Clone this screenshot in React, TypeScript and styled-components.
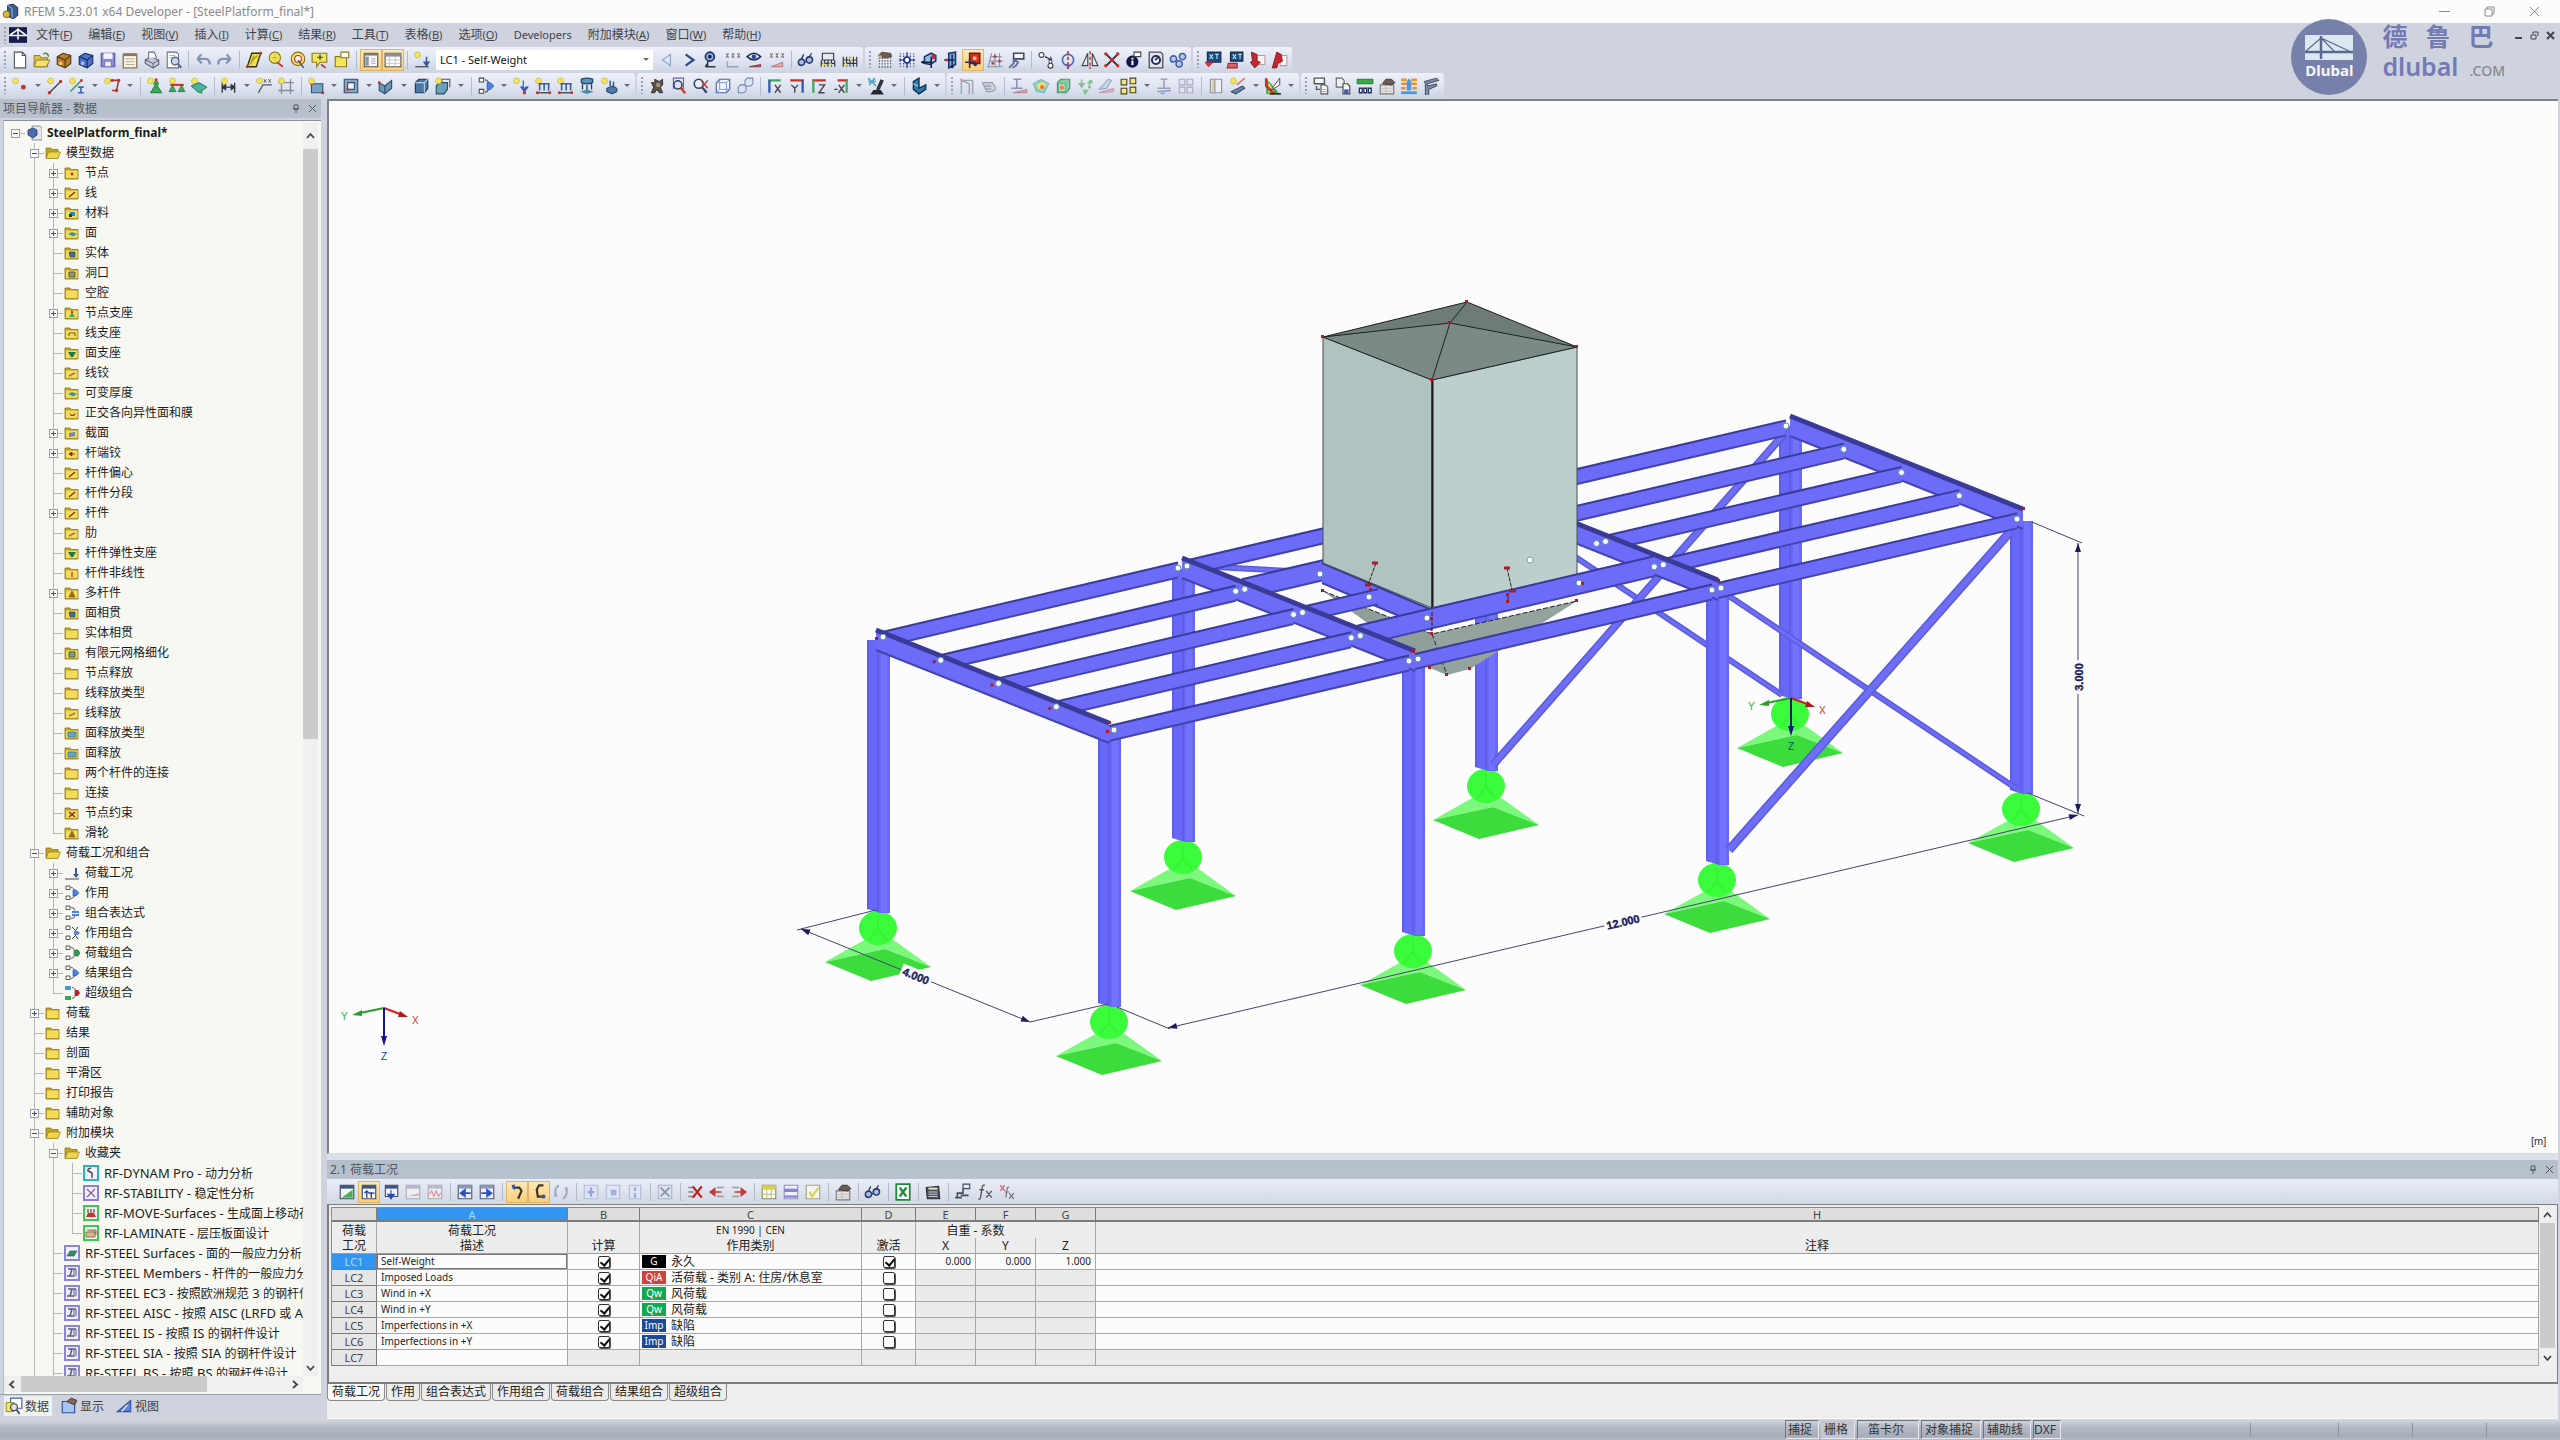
import React from 'react';
import styled, { createGlobalStyle } from 'styled-components';

const UI = '"Noto Sans", "Noto Sans CJK SC", sans-serif';

const GlobalStyle = createGlobalStyle`
  * { box-sizing: border-box; }
  body { margin: 0; background: #cfd3de; font-family: ${UI}; font-size: 12px; color: #222; }
  button, select, input { font: inherit; color: inherit; margin: 0; }
  button { border: 0; padding: 0; background: none; }
`;

/* ---------- icon drawings ---------- */

type Shape = [d: string, fill?: string, stroke?: string, width?: number];

const box = (x: number, y: number, w: number, h: number) => `M${x} ${y}h${w}v${h}h${-w}z`;
const dot = (x: number, y: number, r: number) => `M${x - r} ${y}a${r} ${r} 0 1 0 ${2 * r} 0a${r} ${r} 0 1 0 ${-2 * r} 0z`;
const NONE = 'none';
const K = '#33373d';
const BL = '#3a64a8';
const GY = '#9aa2b4';
const RD = '#c8302c';
const YL = '#f4e65a';
const GN = '#3fa858';
const SUN: Shape = [dot(4, 3.5, 2.6), YL, '#b8a83c', 0.5];

const glyphs: Record<string, Shape[]> = {
  new: [['M3 1h7l3 3v11H3z', '#fff', '#555', 1], ['M10 1v3h3', NONE, '#555', 1]],
  open: [['M1 4h5l1 2h6v8H1z', '#e0c23c', '#8a7420', 0.8], ['M3 8h12l-3 6H1z', '#f6e070', '#8a7420', 0.8], ['M9 3q3-3 5 2', NONE, '#4a8a3a', 1.2]],
  boxBrown: [['M2 5l5-3 7 2v7l-5 4-7-3z', '#b8802c', '#5a3a10', 1], ['M2 5l7 3 5-4M9 8v7', NONE, '#5a3a10', 1], [dot(5, 11, 1.6), '#f4c860']],
  boxBlue: [['M2 5l5-3 7 2v7l-5 4-7-3z', '#4a74c8', '#1c2c60', 1], ['M2 5l7 3 5-4M9 8v7', NONE, '#1c2c60', 1], [dot(5, 11, 1.6), '#a8c4f4']],
  save: [[box(2, 2, 12, 12), '#8a8ed0', '#5458a0', 1], [box(4, 2, 8, 5), '#f4f4fc'], [box(5, 9, 6, 5), '#e8e8f4', '#5458a0', 0.6]],
  clip: [[box(2, 3, 12, 12), '#f8f4e4', '#8a7858', 1.2], [box(2, 2, 12, 2.5), '#8a7858'], ['M4 7h8M4 9.5h8M4 12h8', NONE, '#b0a68c', 0.8]],
  print: [['M2 8l5-3 7 3v4l-5 3-7-4z', '#c4c8d4', '#555c70', 0.9], ['M5 6V1h5l2 5', '#fff', '#666c80', 0.9], ['M2 8l7 3 5-3M9 11v4', NONE, '#555c70', 0.8]],
  preview: [['M2 1h8l2 2v12H2z', '#fff', '#666c80', 0.9], ['M4 4h5M4 6h4', NONE, '#9aa', 0.8], [dot(9, 9, 3.4), '#c8d8ec', '#5a6a8c', 1.2], ['M11.5 11.5l3 3.5', NONE, '#5a6a8c', 2]],
  undo: [['M3 7h7q4 0 4 5M3 7l3.5-4M3 7l4 4', NONE, '#8494b4', 2]],
  redo: [['M13 7H6q-4 0-4 5M13 7L9.5 3M13 7l-4 4', NONE, '#8494b4', 2]],
  rhomb: [['M6 2h8l-4 12H2z', '#f0e050', '#33300c', 1.2], ['M8 4L5 12M11 4l-6 6', NONE, '#a09428', 1], [dot(14, 2, 1.3), RD], [dot(2, 14, 1.3), RD]],
  lasso: [[dot(7, 6, 5), YL, '#8a7a20', 1], ['M9 10l5 4', NONE, RD, 1.6], ['M4 6h6M7 3v6', NONE, '#c8b040', 0.8]],
  target: [[dot(8, 7, 6), YL, '#8a6a20', 1], [dot(8, 7, 3), '#fff', RD, 1], ['M8 8l5 7', NONE, '#555', 1.4]],
  yplus: [['M1 2h13v8H8l-3 4v-4H1z', YL, '#8a7a20', 1], ['M8 3v5M5.5 5.5h5', NONE, K, 1], ['M9 12l4 3', NONE, RD, 1.4]],
  ysheet: [['M2 5h10v9H2z', YL, '#8a7a20', 1], [box(7, 1, 7, 5), '#fff', '#8a7a20', 1]],
  nav: [[box(2, 2, 12, 12), '#f8f8f8', '#555', 1], [box(2, 2, 12, 2), '#777'], [box(3, 5, 3, 8), '#8a94a8'], ['M8 7h4M8 9h4M8 11h4', NONE, '#aaa', 0.8]],
  tbl: [[box(1, 2, 14, 12), '#fff', '#555', 1], [box(1, 2, 14, 3), '#8a8f9c'], ['M1 8h14M1 11h14M5 5v9M10 5v9', NONE, '#bbb', 0.7]],
  loadcase: [SUN, ['M12 5v6M12 13l-2-3h4z', '#3a5a9c', '#3a5a9c', 1.4], ['M2 14h12', NONE, K, 1]],
  prev: [['M11 3L4 8l7 5z', '#e0e8f8', '#8aa0c8', 1]],
  next: [['M5 3l7 5-7 5', NONE, '#2c4c8c', 2]],
  eyeA: [[dot(7, 5, 4), '#8aa8d8', '#1c2c5c', 1.4], [dot(7, 5, 1.6), '#10204c'], ['M3 14h9M5 9v5M5 11l-2 3', NONE, K, 1.4]],
  eyeB: [['M1 5q6-6 12 0q-6 6-12 0z', '#dce6f8', '#1c2c5c', 1.4], [dot(7, 5, 2), '#2c4c8c'], ['M3 14l10-2v2z', '#d06060', '#803030', 0.8]],
  xxx: [['M2 2l2 4M4 2L2 6M7 2l2 4M9 2L7 6M12 2l2 4M14 2l-2 4', NONE, '#777', 0.9], ['M3 9v5h10', NONE, GY, 1.2]],
  xxr: [['M2 2l2 4M4 2L2 6M7 2l2 4M9 2L7 6M12 2l2 4M14 2l-2 4', NONE, '#777', 0.9], ['M3 14l10-4v4z', '#e8b0b0', '#b07070', 0.8]],
  glasses: [[dot(4, 10, 2.8), '#a8c0e8', '#2c3c6c', 1.4], [dot(11, 8, 2.8), '#a8c0e8', '#2c3c6c', 1.4], ['M4 7l2-4M11 5l2-3M7 10l2-1', NONE, '#2c3c6c', 1.2]],
  calc: [[box(3, 2, 10, 6), '#e4e8f0', K, 1], ['M2 8v6M5 8v6M8 8v6M11 8v6M14 8v6M2 11h12', NONE, K, 1], [dot(4, 12, 1.4), YL], [dot(10, 12, 1.4), YL]],
  calc2: [['M2 5v9M5 5v9M8 5v9M11 5v9M14 5v9M2 8h12M2 11h12', NONE, K, 1], [dot(4, 12, 1.4), YL], [dot(9, 7, 1.4), YL]],
  dots: [['M3 6v9M5.5 6v9M8 6v9M10.5 6v9M13 6v9', NONE, '#666', 1], ['M2 7.5h12M2 10h12M2 12.5h12', NONE, '#e6eaf3', 1], ['M2 4l3-3 8 1 1 3-4 1H3z', '#6c5c54', '#403834', 0.6], [box(2, 4, 3, 2), '#d8c49c']],
  gridpt: [['M2 2v12M5 2v12M11 2v12M14 2v12M8 2v12', NONE, '#2c3c88', 1], ['M1 3.5h14M1 6h14M1 10h14M1 12.5h14', NONE, '#e6eaf3', 1.2], [dot(8, 8, 2.6), '#fff', '#1c2c8c', 1.4], ['M8 1v4M8 11v4M1 8h4M11 8h4', NONE, '#1c2c8c', 1]],
  snap: [['M4 5l6-3 4 2v5l-5 3-5-1z', '#8cc0e8', '#1c3468', 1.4], ['M1 10h10M10 5v10', NONE, '#181c48', 1.4], [dot(12, 5, 2), RD], [dot(3, 10, 1.3), '#181c48']],
  snap2: [['M6 2l6-1v11l-6 3z', '#6ab0e4', '#1c3468', 1.4], ['M2 8h9M9 3v11', NONE, '#181c48', 1.2], [dot(4, 8, 1.4), RD], [dot(9, 14, 1.4), '#181c48']],
  snap3: [[box(5, 2, 9, 9), '#d83028', '#7c1814', 1.4], [box(8, 5, 3, 3), '#fbd070'], ['M1 10h9M5 7v8', NONE, '#24305c', 1.4], [dot(10, 12, 1.6), '#24305c']],
  mesh: [['M5 2L2 14M8 2v12M12 2v12M1 14h14M3 9h12M4 5h10', NONE, '#8a94ac', 1], [dot(8, 5, 1.2), RD], [dot(6, 11, 1.2), RD], [dot(12, 9, 1.2), RD]],
  flag: [[box(5, 2, 9, 5), '#f4f6fa', '#444a5c', 1.4], ['M5 7v4M1 15l4-4 1-3 3 2-2 3-3 2', NONE, '#5a6c98', 1.6]],
  chain: [[dot(4, 3.5, 2.2), '#fff', K, 1], [dot(12, 13, 2.2), '#fff', K, 1], ['M7 5l6 3M13 8l-3-.5M13 8l-1-3', NONE, K, 1], [dot(12, 9.5, 1.4), '#fff', K, 0.8]],
  rotate: [[dot(8, 8, 5), NONE, '#4a64b0', 1.4], ['M8 0v3M8 5v3M8 10v3M8 14v2', NONE, RD, 1.4], ['M6 12l3 1.5-2 2', NONE, '#4a64b0', 1.4]],
  mirror: [['M6 2v11H1zM10 2v11h5z', '#e4e8ec', '#444', 1], ['M8 0v3M8 5v3M8 10v3M8 14v2', NONE, RD, 1.2]],
  cross: [['M2 2l12 12M14 2L2 14', NONE, '#4a3038', 1.6], [dot(2.5, 2.5, 1.5), RD], [dot(13, 2.5, 1.5), RD], [dot(8, 8, 1.6), RD], [dot(2.5, 13, 1.5), RD], [dot(13, 13, 1.5), RD]],
  info: [[dot(6.5, 9.5, 5.4), '#10184c'], [box(5.7, 8.5, 1.8, 4), '#fff'], [box(5.7, 6, 1.8, 1.5), '#fff'], [box(8, 1, 6, 4), '#fff', '#444', 1]],
  sheetc: [['M2 1h10l2 2v12H2z', '#e4e4e8', '#555', 1.2], [dot(8, 8, 3.6), '#fff', '#24305c', 1.8], ['M7 8l4-3', NONE, '#24305c', 1.4]],
  gears: [[dot(4, 7, 2.8), '#b4c8ec', '#4058a0', 1.3], [dot(12, 5, 2.8), '#b4c8ec', '#4058a0', 1.3], [dot(9, 11.5, 2.8), '#b4c8ec', '#4058a0', 1.3]],
  teal: [[box(3, 1, 12, 9), '#1c4c80', '#102c4c', 1], ['M5 3l3 4M8 3L5 7M10 3h3M11.5 3v4', NONE, '#b4e0f0', 1], ['M1 10l3 4 4-4z', '#d83840', '#a82028', 0.8]],
  tealUp: [[box(4, 1, 11, 8), '#1c4c80', '#102c4c', 1], ['M6 3l3 4M9 3L6 7M11 3h3M12.5 3v4', NONE, '#b4e0f0', 1], ['M2 11h8v4H1z', '#d86068', '#a02830', 0.9]],
  pdf: [['M8 4h7v8H8z', '#f8f4f4', '#b89898', 0.9], ['M3 1l5 2v6l3 1-5 5-4-5 2-1z', '#c82430', '#801820', 0.8]],
  pdfUp: [['M9 4h6v9H9z', '#f8f4f4', '#b89898', 0.9], ['M6 1l4 2 1 6-4 2-1 4H2z', '#c82430', '#801820', 0.8]],
  node: [SUN, [dot(11, 9, 2.2), RD]],
  line: [SUN, ['M3 14L13 4', NONE, '#444', 1.2], [dot(3, 14, 1.5), RD], [dot(13, 4, 1.5), RD]],
  member: [SUN, ['M2 13L12 3', NONE, '#58a070', 1.6], ['M9 9h5M11.5 9v5M9 14h5', NONE, BL, 1.4], [dot(12, 3, 1.2), RD]],
  poly: [SUN, ['M8 3h6l-2 9H8', NONE, '#a03838', 1.4], [dot(8, 3, 1.4), RD], [dot(14, 3, 1.4), RD], [dot(12, 12, 1.6), RD]],
  support: [SUN, ['M9 6l5 8H4z', GN, '#1c6c34', 0.8], [dot(9, 6, 2.4), '#3a9a50'], [dot(9, 2.5, 1.4), RD]],
  linesup: [SUN, ['M2 7h12', NONE, RD, 1.8], ['M4 7l3 6H1zM12 7l3 6H9z', GN, '#1c6c34', 0.6]],
  surfsup: [SUN, ['M1 8l7-3 7 4-7 5z', '#4ab0a0', '#1c6c54', 0.8], ['M8 14l3-3v4z', GN]],
  dim: [['M2 5v9M13 5v9M2 9h11M2 9l3-2v4zM13 9l-3-2v4z', K, K, 1.2], SUN],
  dimtxt: [SUN, ['M3 14l4-7h8', NONE, '#555', 1.2], ['M8 2l2 3M10 2L8 5M12 2l2 3M14 2l-2 3', NONE, '#555', 0.8]],
  frame: [['M4 2v13M12 2v13M1 5h14M1 12h14', NONE, '#888c98', 1.2], SUN],
  surf: [[box(4, 6, 10, 8), '#7aa4c4', '#34506c', 1], [dot(4, 6, 1.4), RD], [dot(14, 14, 1.4), RD], SUN],
  opening: [[box(2, 2, 12, 12), '#8ca4c4', '#34506c', 1], [box(5, 5, 6, 6), '#f0f4fa', '#34506c', 1], [dot(5, 11, 1.2), RD]],
  shell: [['M2 5l5 3 6-5v7l-6 5-5-3z', '#6c98b8', '#2c4c68', 1], ['M7 8v7', NONE, '#2c4c68', 1], [dot(2, 5, 1.3), RD]],
  solid: [['M3 5l3-3h8v8l-3 4H3z', '#4c78a8', '#1c3454', 1], ['M3 5h8l3-3M11 5v9', NONE, '#b8d0e8', 1]],
  solidset: [['M2 8l3-3h7v6l-3 4H2z', '#6ca0b8', '#2c4c68', 1], ['M7 5V2h7v7', NONE, '#555', 1], SUN],
  combo: [[box(2, 1, 4, 3.5), '#fff', '#444', 0.9], [box(2, 11, 4, 3.5), '#fff', '#444', 0.9], ['M7 2.5q4 0 3 5.5q1 5-3 5.5', NONE, '#555', 1], ['M9 5h3l3 3-3 3H9z', '#4a84e0', '#1c4cb0', 0.6]],
  comboG: [[box(2, 1, 4, 3.5), '#fff', '#444', 0.9], [box(2, 11, 4, 3.5), '#fff', '#444', 0.9], ['M7 2.5q4 0 3 5.5q1 5-3 5.5', NONE, '#555', 1], ['M11 5h3l2 3-2 3h-3z', '#2ca048', '#107028', 0.6]],
  comboX: [[box(2, 1, 4, 3.5), '#fff', '#444', 0.9], [box(2, 11, 4, 3.5), '#fff', '#444', 0.9], ['M8 2l4 4M8 14l4-4M14 2l-2 3M14 14l-2-3', NONE, '#444', 1], ['M10 6h4l2 2-2 2h-4z', '#5a8ce0']],
  comboE: [[box(2, 1, 4, 3.5), '#fff', '#444', 0.9], [box(2, 11, 4, 3.5), '#fff', '#444', 0.9], ['M7 2.5q4 0 4 3M7 13.5q4 0 4-3', NONE, '#555', 1], ['M8 6h7v2H8zM8 9h7v2H8z', '#4a84e0']],
  comboR: [[box(1, 1, 6, 4), '#4a94d8'], [box(1, 11, 6, 4), '#34a850'], ['M8 2.5q4 0 3 5.5q1 5-3 5.5', NONE, '#555', 1], ['M11 5h3l2 3-2 3h-3z', '#c01c2c']],
  lcase: [['M1 14h14', NONE, '#777', 1.4], ['M11 3h2v6h2l-3 4-3-4h2z', '#3a54a0']],
  nload: [SUN, ['M10 3v6M10 9h-2l3 4 3-4h-2', '#3a6cc8', '#2c4c98', 1], [dot(11, 14, 1.5), RD]],
  mload: [SUN, ['M4 6h10M5 6v6M9 6v6M13 6v6', NONE, '#3a5ca8', 1.4], ['M2 14h13', NONE, '#444', 1.2], [dot(3, 14, 1.3), RD], [dot(14, 14, 1.3), RD]],
  sload: [['M3 2q5-2 10 0v3q-5 2-10 0zM4 6v5M8 7v5M12 6v5', '#5c94bc', '#24486c', 1.2], ['M2 13l6-2 6 2-6 2z', '#4a8ca8']],
  gload: [SUN, ['M9 3v5M12 4v5', NONE, BL, 1.4], ['M6 10l5-2 4 2v3l-4 2-5-2z', '#4c78a8', '#1c3454', 0.8]],
  tele: [['M3 5h3V2l4 2 3-2v5l-2 2 2 5h-3l-2-3-2 3H3l2-5z', '#5c5048', '#332c28', 0.8], [dot(9, 7, 2), '#a09080']],
  zoomw: [[box(3, 1, 9, 9), NONE, '#7a5cb0', 1], [dot(7, 7, 3.6), '#d8e4f4', '#33406c', 1.4], ['M9.5 9.5l4 5', NONE, RD, 2]],
  zoomx: [[dot(6, 6, 4), '#e8eef8', '#33406c', 1.4], ['M9 9l4 5', NONE, '#33406c', 2], ['M8 3l6 7M14 3L8 10', NONE, RD, 1.2]],
  cube: [['M2 5l3-3h9v9l-3 3H2z', '#eef4fc', '#4c64a0', 1], ['M2 5h9l3-3M11 5v9M5 2v9h9M5 11l-3 3', NONE, '#7c90c0', 0.8]],
  cubes: [['M2 9l2-2h5v5l-2 2H2z', '#dce4f4', '#7484ac', 0.9], ['M8 3l2-2h5v5l-2 2H8z', '#dce4f4', '#7484ac', 0.9]],
  vx: [['M2 3h11', NONE, GN, 2], ['M3 3v11', NONE, '#2c54b8', 2], ['M8 7l5 7M13 7l-5 7', NONE, '#444', 1.2]],
  vy: [['M2 3h12', NONE, RD, 2], ['M13 3v11', NONE, '#2c54b8', 2], ['M3 7l3 3 3-3M6 10v4', NONE, '#444', 1.2]],
  vz: [['M2 3h12', NONE, RD, 2], ['M3 3v11', NONE, GN, 2], ['M8 7h5l-5 7h5', NONE, '#444', 1.2]],
  vnx: [['M5 3h9', NONE, RD, 2], ['M13 3v11', NONE, GN, 2], ['M6 7l5 7M11 7l-5 7M2 11h3', NONE, '#444', 1.2]],
  scope: [['M4 15h10l-2-3H6z', '#23272c', '#23272c', 1], ['M8 11l4-9 3 1-4 9z', '#33383e'], ['M1 1l7 7M7 1L2 7M1 4h7', NONE, '#48a8d0', 1.4]],
  iso: [['M3 4l5-3v9l6-3v4l-6 4-5-4z', '#2c7ca8', '#142c4c', 1.2], ['M3 6l4 2', NONE, '#a8dcec', 1]],
  archg: [['M3 15V3h10v12M3 3l7 3v9', NONE, '#a0a4b0', 1.3], [dot(3, 2.5, 1.2), '#d0a0a8']],
  hand: [['M2 5h9l2 3q2 4-3 5H6z', '#cfd3da', '#9ca0aa', 1], ['M4 8h6M5 10.5h5', NONE, '#9ca0aa', 1.2]],
  isec: [['M3 2h7M6 2v8M1 10h10', NONE, '#8894b8', 1.4], ['M3 14l12-3v3z', '#dca0a8', '#b07880', 0.7]],
  patch: [['M1 6l7-4 7 4-4 8-7-1z', '#84d4b4', '#84b4dc', 0.9], ['M4 7l5-3 4 3-4 5-4-2z', '#f4dc6c'], [dot(9, 9, 1.8), '#e07050']],
  prism: [['M3 5l3-3h8v8l-3 4H3z', '#84cca4', '#4a9474', 1], [box(4, 6, 6, 7), '#b8e8b8', '#4a9474', 0.6], [dot(7, 9.5, 2), '#e88850']],
  greens: [['M5 2v5M3 6l2 3 2-3zM10 5h5M12 3v5M7 12l1 3 2-3z', '#84c090', '#84c090', 1.3], [dot(12, 9, 1.3), '#84c090'], [dot(13, 4, 1.5), '#84c090']],
  wedge: [['M1 11L9 2l3 1-4 7z', '#c4d4e8', '#9ca8c4', 0.9], ['M1 14l13-4v3z', '#e4b8c0', '#b894a0', 0.8]],
  cubesY: [[box(1, 2, 5, 5), '#f0e884', '#4c4620', 1], [box(9, 1, 5, 5), '#f0e884', '#4c4620', 1], [box(1, 10, 5, 5), '#f0e884', '#4c4620', 1], [box(9, 9, 5, 5), '#f0e884', '#4c4620', 1]],
  ibeamr: [['M5 2h6M8 2v8M2 10h12', NONE, '#9aa2b4', 1.4], ['M2 13l12-1M5 14q2 2 4-1', NONE, '#8c94d8', 1.3]],
  cubesG: [[box(2, 2, 5, 5), '#e4e4f0', '#a8a8c0', 1], [box(9, 2, 5, 5), '#e4e4f0', '#a8a8c0', 1], [box(2, 9, 5, 5), '#e4e4f0', '#a8a8c0', 1], [box(9, 9, 5, 5), '#e4e4f0', '#a8a8c0', 1]],
  door: [[box(3, 2, 10, 12), '#eceef4', '#8c94a8', 1], [box(4, 3, 3, 10), '#d8d0a0'], ['M7 2v12', NONE, '#8c94a8', 1]],
  pen: [['M2 13l10-5 2 2-8 5z', '#6c84a8', '#33405c', 0.9], SUN, ['M7 7l7-6', NONE, '#e07078', 1.3]],
  rainbow: [['M2 1v14l11-1z', '#38a848'], ['M2 1l2 2v11l5-1z', YL], ['M2 1v7l7 7', NONE, RD, 2.4], ['M6 12L14 1v6z', '#fff', '#444', 0.8], ['M5 15h10', NONE, '#222', 1.4]],
  winA: [[box(2, 1, 9, 5), '#f4f6fa', '#555', 1.2], ['M8 7h4l2 2v6H8z', '#fff', '#555', 1], ['M4 8v3h3', NONE, '#555', 1.2], ['M9 11h4M9 13h4', NONE, '#999', 0.8]],
  winB: [['M2 1h5l2 2v6H2z', '#f0f0f0', '#666', 1], ['M8 6h4l2 2v7H8z', '#fff', '#444', 1], [box(9, 11, 4, 4), '#4858a8']],
  ruler: [[box(1, 2, 14, 4), '#38a848', '#207830', 0.8], [box(3, 10, 2.5, 4), '#fff', '#24305c', 1.2], [box(7, 10, 2.5, 4), '#fff', '#24305c', 1.2], [box(11, 10, 2.5, 4), '#fff', '#24305c', 1.2]],
  hammer: [['M2 7h12v8H2z', '#e8e6e4', '#777', 1], ['M3 10h10M3 12.5h10M7 7v8', NONE, '#bbb', 0.8], ['M4 6l3-4h5l3 3-3 2z', '#6c5c54', '#403834', 0.8]],
  bricks: [['M1 2.5h5M1 6h5M10 2.5h5M10 6h5M1 10h4M11 10h4', NONE, '#e89030', 2.2], ['M6 12V4l2-3 2 3v8z', '#4c94e0'], ['M1 14h14', NONE, '#4c94e0', 2.4]],
  steel: [['M2 4l11-3 2 2-10 3v2l8-2v2l-7 3v6l-3-1V6z', '#7c88a4', '#3c4460', 0.8]],
  tgreen: [[box(2, 2, 12, 12), '#f4f8f4', '#3c4c6c', 1], [box(2, 2, 12, 3), '#3c5484'], ['M3 13l10-7v7z', '#48b050']],
  tblue: [[box(2, 2, 12, 12), '#f4f6fa', '#3c4c6c', 1], [box(2, 2, 12, 3), '#3c5484'], ['M6 7v6M4 9l2-2 2 2M10 13V8M8 9h5', NONE, '#2c3c8c', 1.2]],
  tdown: [[box(3, 2, 11, 10), '#f4f6fa', '#3c4c6c', 1], [box(3, 2, 11, 3), '#3c5484'], ['M8 6v7M5 10l3 4 3-4z', '#2c4cb0', '#2c4cb0', 1]],
  tgray: [[box(2, 2, 12, 12), '#eceef4', '#a4aabc', 1], [box(2, 2, 12, 3), '#b4bacc'], ['M3 12l10-3v2z', '#e0a0a8']],
  twave: [[box(2, 2, 12, 12), '#eceef4', '#b4a4b4', 1], [box(2, 2, 12, 3), '#b4bacc'], ['M3 10l2-3 2 5 2-5 2 5 2-3', NONE, '#d89098', 1]],
  tleft: [[box(2, 2, 12, 12), '#eceef4', '#4c5878', 1], [box(2, 2, 12, 3), '#8c98b8'], ['M13 9H5M8 6L4 9l4 3z', '#2c54c0', '#2c54c0', 1.4]],
  tright: [[box(2, 2, 12, 12), '#eceef4', '#4c5878', 1], [box(2, 2, 12, 3), '#8c98b8'], ['M3 9h8M8 6l4 3-4 3z', '#2c54c0', '#2c54c0', 1.4]],
  hookA: [['M4 4h6l2 3-3 7', NONE, '#40382c', 2], ['M3 2l3-1v6z', '#2c54c0']],
  hookB: [['M12 2H8L6 6l1 6h5', NONE, '#40382c', 2], [dot(12, 12, 1.8), '#2c54c0']],
  cycle: [['M6 2q-5 4-2 10M10 14q5-4 2-10M4 12l-2-2M12 4l2 2', NONE, '#a0aac0', 1.8]],
  pblue: [[box(2, 2, 12, 12), '#dfe5f6', '#b4bcd8', 1], ['M8 4v8M5 8h6', NONE, '#94a4dc', 2]],
  pbox: [[box(2, 2, 12, 12), '#dfe5f6', '#b4bcd8', 1], [box(6, 6, 5, 5), '#a4b0e0']],
  pcol: [[box(3, 2, 10, 12), '#dfe5f6', '#b4bcd8', 1], ['M8 4v3M8 9v4', NONE, '#94a4dc', 2]],
  px: [[box(2, 2, 12, 12), '#dfe5ee', '#a8b2c8', 1], ['M4 4l8 8M12 4l-8 8', NONE, '#8c9cb4', 1.6]],
  delrow: [['M2 4h5M2 8h5M2 12h5', NONE, '#888', 1.4], ['M6 3l8 10M14 3L6 13', NONE, '#c02020', 2]],
  delL: [['M8 4h6M8 12h6', NONE, '#999', 1.4], ['M2 8h10M6 5L2 8l4 3z', '#c83838', '#c83838', 1.4]],
  delR: [['M2 4h6M2 12h6', NONE, '#999', 1.4], ['M4 8h10M10 5l4 3-4 3z', '#c83838', '#c83838', 1.4]],
  rowsY: [[box(2, 2, 12, 12), '#fdfdf0', '#8a8a60', 1], [box(2, 2, 12, 4), '#d8d04c'], ['M6 6v8M10 6v8M2 10h12', NONE, '#b4b484', 0.8]],
  rowsP: [[box(2, 2, 12, 12), '#f0f0fc', '#9494b8', 1], [box(2, 5, 12, 3), '#8484d8'], [box(2, 11, 12, 2), '#8484d8']],
  rowsC: [[box(2, 2, 12, 12), '#f4f4e8', '#a4a48c', 1], ['M5 8l2 4 6-8', NONE, '#d8d04c', 1.8]],
  excel: [[box(2, 1, 12, 14), '#fff', '#208838', 1.6], ['M5 4l6 8M11 4l-6 8', NONE, '#208838', 2]],
  calcp: [['M2 4l11-1 1 11H3z', '#4c5058', '#2c3034', 1], ['M4 5h8', NONE, '#d8e4c8', 1.8], ['M4 8h8M4 10h8M4 12h8', NONE, '#c8ccd4', 1]],
  tiny: [[box(8, 1, 6, 4), '#e4e8f0', '#444a5c', 1], ['M8 5v4H3v4M1 13h6M6 11h7', NONE, '#444a5c', 1.4]],
  fx: [['M8 2Q6 1 5.5 4L4 13q-.5 2-2 1M3 6h4M9 7l5 6M14 7l-5 6', NONE, '#555', 1.2]],
  fxr: [['M2 2l4 5M6 2L2 7', NONE, '#d07080', 1.4], ['M10 4Q8 3 8 6l-1 7M6 8h4M10 9l4 5M14 9l-4 5', NONE, '#777', 1.1]],
  folder: [['M1 3h5l1 1.5h7V14H1z', '#c4a428', '#8c7418', 0.8], ['M2 5.5h11.5V13H2z', '#f2dc58']],
  folderOpen: [['M1 3h5l1 1.5h6V13H1z', '#c4a428', '#8c7418', 0.8], ['M3.5 7H15.5L13 13.5H1z', '#ecd44c', '#8c7418', 0.6]],
  app: [['M5 2l5-1 4 3v7l-4 3-5-2z', '#3c5c8c', '#1c2c4c', 0.8], ['M5 2l4 3v8', NONE, '#a8c4e0', 0.8], [dot(4, 10, 3), '#d8b838', '#806818', 0.8]],
  root: [['M6 1h8l2 2v12H6z', '#e4e8ee', '#777c88', 0.8], ['M2 5l5-2 4 2v5l-4 3-5-3z', '#4c6cb0', '#24386c', 0.8]],
  rfem: [[box(0, 1, 16, 14), '#161c4c'], ['M0 8.5h16M8 2v10M1 8L8 3l7 5', NONE, '#fff', 1.4]],
  mData: [[box(5, 1, 10, 9), '#fff', '#3c5ca8', 1], [box(1, 5, 7, 8), YL, '#8a7a20', 0.8], [dot(8, 9, 3), '#d4e4f4', '#444', 1], ['M10 11l3 4', NONE, '#555', 1.6]],
  mView: [[box(2, 4, 11, 10), '#a8c4f0', '#2c4ca0', 1], ['M6 4l4-3 5 2-2 4z', '#806858', '#403430', 0.8]],
  mEye: [['M2 13h12V3z', '#5c84d8', '#2c4ca0', 0.9], ['M6 13l5-6', NONE, '#fff', 1]],
};

const badges: Record<string, Shape[]> = {
  n: [[dot(8, 9, 1.4), RD]],
  l: [['M5 12l6-5', NONE, '#7a2c10', 1.2]],
  m: [[box(6, 7, 5, 4), '#2c8cb0'], [box(5, 9, 3, 3), '#183c6c']],
  s: [['M4 9l4-2 5 2-4 2.5z', '#3c94a0']],
  o: [['M5 7h6v5H6z', '#4c6c84', '#24405c', 0.6]],
  h: [[box(5, 7, 6, 5), '#8a9a70', '#4c6048', 1]],
  g: [['M8 7l3 5H5z', GN], [dot(8, 7, 1.2), RD]],
  w: [['M5 8h6M5 8v3M11 8v3', NONE, '#806018', 1.2]],
  d: [['M4 7h8l-3 5H7z', '#207848']],
  p: [['M5 11l6-3', NONE, '#a87068', 1.4]],
  r: [['M5 8l3 2 4-2-2 3H7z', '#a03828']],
  c: [['M5 12V8l6-1v4z', '#7484c0']],
  e: [['M5 9l3-2v4zM8 9h3', '#802818', '#802818', 0.8]],
  x: [['M5 7l6 5M11 7l-6 5', NONE, '#902818', 1.6]],
  v: [['M8 7v5', NONE, '#c06018', 1.6]],
  t: [['M8 6l3 6H5z', '#a06818', '#704810', 0.6]],
  b: [[box(4, 7, 8, 5), '#6ca4b8', '#3c7488', 0.8]],
};

const modules: Record<string, [string, Shape[]]> = {
  dyn: ['#20b8b8', [['M8 3q-4 1-3 3 3 1 4 2v5', NONE, '#444', 1.4]]],
  stab: ['#8c7ce0', [['M4 4l8 8M12 4l-8 8', NONE, '#806080', 1.2]]],
  move: ['#3cc84c', [['M3 12h10l-2-4H5z', '#c03828'], ['M5 4v4M8 4v4M11 4v4', NONE, '#803020', 1.2]]],
  lam: ['#3cc84c', [['M3 7h9v5H3zM4 5h9v5', '#d8b890', '#80684c', 0.9]]],
  surf: ['#8c84d8', [['M3 11l3-5h7l-3 5z', '#309070', '#205848', 0.6]]],
  steel: ['#8c84d8', [['M9 5l4-1v7l-4 1z', '#a4a4c4'], ['M4 4h8M8 4l-2 7M3 11h7', NONE, '#5c5c84', 1.6]]],
};

const Glyph = styled.svg<{ $size: number }>`
  width: ${p => p.$size}px;
  height: ${p => p.$size}px;
  flex: none;
  display: block;
`;

function Icon({ name, size = 18, extra }: { name: string; size?: number; extra?: string }) {
  const shapes = [...(glyphs[name] ?? []), ...(extra ? badges[extra] ?? [] : [])];
  return (
    <Glyph $size={size} viewBox="0 0 16 16" aria-hidden="true">
      {shapes.map(([d, fill = K, stroke, w], i) => <path key={i} d={d} fill={fill} stroke={stroke} strokeWidth={w} />)}
    </Glyph>
  );
}

function ModuleIcon({ name }: { name: string }) {
  const [frame, shapes] = modules[name];
  return (
    <Glyph $size={16} viewBox="0 0 16 16" aria-hidden="true">
      <path d={box(1, 1, 14, 14)} fill="#f2f0fa" stroke={frame} strokeWidth={2} />
      {shapes.map(([d, fill = K, stroke, w], i) => <path key={i} d={d} fill={fill} stroke={stroke} strokeWidth={w} />)}
    </Glyph>
  );
}

/* ---------- window frame ---------- */

const Window = styled.div`
  position: relative;
  height: 100vh;
  display: flex;
  flex-direction: column;
  overflow: hidden;
`;

const TitleBar = styled.header`
  height: 23px;
  flex: none;
  display: flex;
  align-items: center;
  gap: 4px;
  padding: 0 20px 0 2px;
  background: #fcfcfc;
  color: #8a8a8a;
`;

const TitleText = styled.h1`
  margin: 0;
  flex: 1;
  font-size: 12px;
  font-weight: 400;
`;

const WindowButtons = styled.div<{ $gap: number }>`
  display: flex;
  gap: ${p => p.$gap}px;
  margin-left: auto;
`;

const WindowButton = styled.button<{ $size: number }>`
  width: ${p => p.$size}px;
  height: ${p => p.$size}px;
  svg { display: block; width: 100%; height: 100%; fill: none; stroke: currentColor; }
`;

const MenuBar = styled.nav`
  height: 24px;
  flex: none;
  display: flex;
  align-items: center;
  padding: 0 5px 0 0;
  background: #cfd3de;
  color: #40444c;
`;

const MenuItem = styled.button`
  margin-left: 16px;
  line-height: 20px;
  white-space: nowrap;
  font-size: 12px;
  small { font-size: 11px; }
  u { text-underline-offset: 1px; }
  &:first-of-type { margin-left: 9px; }
`;

const Brand = styled.div`
  position: absolute;
  top: 19px;
  right: 55px;
  display: flex;
  align-items: center;
  gap: 15px;
  color: #747ab4;
`;

const BrandDisc = styled.div`
  width: 76px;
  height: 76px;
  border-radius: 50%;
  background: #7680aa;
  display: flex;
  flex-direction: column;
  align-items: center;
  justify-content: center;
  color: #f4f7fb;
  font-size: 15px;
  font-weight: 700;
  line-height: 20px;
  svg { width: 48px; height: 25px; display: block; }
`;

const BrandText = styled.div`
  display: flex;
  flex-direction: column;
  padding-bottom: 6px;
`;

const BrandHan = styled.div`
  display: flex;
  gap: 18px;
  font-family: "Noto Sans CJK SC", sans-serif;
  font-size: 25px;
  font-weight: 700;
  line-height: 28px;
`;

const BrandLatin = styled.div`
  display: flex;
  align-items: baseline;
  gap: 11px;
  font-size: 25px;
  font-weight: 600;
  line-height: 34px;
  span { font-size: 14px; font-weight: 500; color: #85878f; }
`;

/* ---------- toolbars ---------- */

const ToolRow = styled.div`
  height: 26px;
  flex: none;
  display: flex;
  gap: 2px;
  background: #cfd3de;
`;

const ToolStrip = styled.div`
  height: 25px;
  display: flex;
  align-items: center;
  padding-right: 2px;
  border-radius: 3px;
  background: linear-gradient(#eef1f9, #dde3f0 60%, #cdd4e2);
`;

const Grip = styled.span`
  width: 3px;
  height: 17px;
  margin: 0 2px 0 4px;
  background: repeating-linear-gradient(#9aa0ae 0 2px, transparent 2px 4px);
  background-size: 2px 100%;
  background-repeat: no-repeat;
`;

const ToolButton = styled.button<{ $on?: boolean }>`
  width: 22px;
  height: 22px;
  flex: none;
  display: flex;
  align-items: center;
  justify-content: center;
  border: 1px solid ${p => (p.$on ? '#e0b468' : 'transparent')};
  background: ${p => (p.$on ? 'linear-gradient(#fdeab8, #fbcf78)' : 'none')};
`;

const DropButton = styled.button`
  width: 13px;
  height: 22px;
  flex: none;
  &::after {
    content: '';
    display: block;
    margin: 0 auto;
    width: 0;
    border: 3px solid transparent;
    border-top-color: #666b76;
    border-bottom: 0;
  }
`;

const Rule = styled.span<{ $w: number }>`
  width: ${p => p.$w}px;
  height: 18px;
  flex: none;
  background: linear-gradient(#b4bac8, #b4bac8) center / 1px 100% no-repeat;
`;

function Tools({ items, rule = 8 }: { items: string; rule?: number }) {
  return (
    <>
      {items.split(' ').map((item, i) => {
        if (item === '|') return <Rule key={i} $w={rule} />;
        if (item === 'v') return <DropButton key={i} aria-label="options" />;
        const on = item.startsWith('*');
        const name = on ? item.slice(1) : item;
        return (
          <ToolButton key={i} $on={on} aria-label={name}>
            <Icon name={name} />
          </ToolButton>
        );
      })}
    </>
  );
}

const CasePicker = styled.label`
  width: 217px;
  height: 20px;
  margin: 0 3px;
  display: flex;
  align-items: center;
  background: #fff;
  select {
    flex: 1;
    height: 20px;
    padding: 0 4px;
    border: 0;
    background: none;
    appearance: none;
    font-size: 11px;
    color: #111;
  }
  &::after {
    content: '';
    margin: 0 4px;
    border: 3px solid transparent;
    border-top-color: #666b76;
    border-bottom: 0;
  }
`;

/* ---------- navigator ---------- */

const Main = styled.main`
  flex: 1;
  min-height: 0;
  display: flex;
`;

const Navigator = styled.aside`
  width: 327px;
  flex: none;
  display: flex;
  flex-direction: column;
  padding-right: 6px;
  background: #cfd3de;
`;

const PanelHead = styled.div`
  height: 19px;
  flex: none;
  display: flex;
  align-items: center;
  padding: 0 4px 0 3px;
  background: linear-gradient(#b3bfc9, #b9c2cf);
  color: #50565e;
  h2 { margin: 0; font-size: 12px; font-weight: 400; line-height: 18px; }
`;

const TreeBox = styled.div`
  flex: 1;
  min-height: 0;
  display: grid;
  grid-template-columns: minmax(0, 1fr) 15px;
  grid-template-rows: minmax(0, 1fr) 16px;
  margin: 2px 0 0 3px;
  padding: 2px 3px 2px 0;
  border-top: 1px solid #8c929c;
  border-left: 1px solid #b4b8c0;
  background: #f8f8f2;
`;

const Tree = styled.ul`
  margin: 0;
  padding: 0 0 0 2px;
  list-style: none;
  overflow: hidden;
`;

const TreeRow = styled.li`
  height: 20px;
  display: flex;
  align-items: center;
  white-space: nowrap;
  color: #1c1c1c;
  svg { margin: 0 5px 0 1px; }
`;

type Guide = 'none' | 'pass' | 'tee' | 'end' | 'stub';

const lineUp = 'linear-gradient(#b8b8b8, #b8b8b8) 9px 0 / 1px 10px no-repeat';
const lineAll = 'linear-gradient(#b8b8b8, #b8b8b8) 9px 0 / 1px 20px no-repeat';
const lineSide = 'linear-gradient(#b8b8b8, #b8b8b8) 9px 10px / 10px 1px no-repeat';
const guides: Record<Guide, string> = {
  none: 'none',
  pass: lineAll,
  tee: `${lineAll}, ${lineSide}`,
  end: `${lineUp}, ${lineSide}`,
  stub: lineSide,
};

const TreeCell = styled.span<{ $guide: Guide }>`
  width: 19px;
  height: 20px;
  flex: none;
  display: flex;
  align-items: center;
  justify-content: center;
  background: ${p => guides[p.$guide]};
`;

const Expander = styled.button<{ $open: boolean }>`
  width: 9px;
  height: 9px;
  border: 1px solid #98a0b0;
  background:
    linear-gradient(#44506c, #44506c) center / 5px 1px no-repeat,
    ${p => (p.$open ? '' : 'linear-gradient(#44506c, #44506c) center / 1px 5px no-repeat,')}
    #f8f8f8;
`;

const TreeLabel = styled.span<{ $bold?: boolean }>`
  font-size: 12px;
  font-weight: ${p => (p.$bold ? 700 : 400)};
  line-height: 20px;
`;

const Latin = styled.span`
  font-size: 13px;
`;

const ScrollV = styled.div`
  display: flex;
  flex-direction: column;
  align-items: stretch;
  background: #f0f0f0;
`;

const ScrollH = styled.div`
  display: flex;
  background: #f0f0f0;
`;

const Arrow = styled.button<{ $turn: number; $long: number }>`
  flex: 0 0 ${p => p.$long}px;
  display: flex;
  align-items: center;
  justify-content: center;
  svg { width: 9px; height: 9px; transform: rotate(${p => p.$turn}deg); }
`;

const Thumb = styled.div<{ $grow: number }>`
  flex: ${p => p.$grow} 0 0;
  background: #cbcbcb;
`;

const Track = styled.div<{ $grow: number }>`
  flex: ${p => p.$grow} 0 0;
`;

const Chevron = () => (
  <svg viewBox="0 0 9 9" aria-hidden="true"><path d="M1 6l3.5-4L8 6" fill="none" stroke="#444" strokeWidth="1.8" /></svg>
);

const NavTabs = styled.div`
  height: 25px;
  flex: none;
  display: flex;
  align-items: flex-start;
  gap: 7px;
  padding: 1px 4px;
  border-top: 1px solid #9aa0ac;
  color: #3c4048;
`;

const NavTab = styled.button<{ $on?: boolean }>`
  height: 20px;
  display: flex;
  align-items: center;
  gap: 2px;
  padding: 0 3px 0 1px;
  background: ${p => (p.$on ? '#f0f2f0' : 'none')};
`;

type Row = { l: number; t: string; i: string; b?: string; x?: '+' | '-'; end?: boolean; m?: string };

const leaf = (t: string, b?: string, x?: '+'): Row => ({ l: 2, t, i: 'folder', b, x });

const rows: Row[] = [
  { l: 0, t: 'SteelPlatform_final*', i: 'root', x: '-' },
  { l: 1, t: '模型数据', i: 'folderOpen', x: '-' },
  leaf('节点', 'n', '+'), leaf('线', 'l', '+'), leaf('材料', 'm', '+'), leaf('面', 's', '+'),
  leaf('实体', 'o'), leaf('洞口', 'h'), leaf('空腔'), leaf('节点支座', 'g', '+'),
  leaf('线支座', 'w'), leaf('面支座', 'd'), leaf('线铰', 'p'), leaf('可变厚度', 's'),
  leaf('正交各向异性面和膜', 'r'), leaf('截面', 'c', '+'), leaf('杆端铰', 'e', '+'),
  leaf('杆件偏心', 'l'), leaf('杆件分段', 'l'), leaf('杆件', 'l', '+'), leaf('肋', 'p'),
  leaf('杆件弹性支座', 'd'), leaf('杆件非线性', 'v'), leaf('多杆件', 't', '+'),
  leaf('面相贯', 'o'), leaf('实体相贯'), leaf('有限元网格细化', 'h'), leaf('节点释放'),
  leaf('线释放类型'), leaf('线释放', 'p'), leaf('面释放类型', 'b'), leaf('面释放', 'b'),
  leaf('两个杆件的连接'), leaf('连接'), leaf('节点约束', 'x'),
  { ...leaf('滑轮', 't'), end: true },
  { l: 1, t: '荷载工况和组合', i: 'folderOpen', x: '-' },
  { l: 2, t: '荷载工况', i: 'lcase', x: '+' },
  { l: 2, t: '作用', i: 'combo', x: '+' },
  { l: 2, t: '组合表达式', i: 'comboE', x: '+' },
  { l: 2, t: '作用组合', i: 'comboX', x: '+' },
  { l: 2, t: '荷载组合', i: 'comboG', x: '+' },
  { l: 2, t: '结果组合', i: 'combo', x: '+' },
  { l: 2, t: '超级组合', i: 'comboR', end: true },
  { l: 1, t: '荷载', i: 'folder', x: '+' },
  { l: 1, t: '结果', i: 'folder' },
  { l: 1, t: '剖面', i: 'folder' },
  { l: 1, t: '平滑区', i: 'folder' },
  { l: 1, t: '打印报告', i: 'folder' },
  { l: 1, t: '辅助对象', i: 'folder', x: '+' },
  { l: 1, t: '附加模块', i: 'folderOpen', x: '-' },
  { l: 2, t: '收藏夹', i: 'folderOpen', x: '-' },
  { l: 3, t: 'RF-DYNAM Pro - 动力分析', i: '', m: 'dyn' },
  { l: 3, t: 'RF-STABILITY - 稳定性分析', i: '', m: 'stab' },
  { l: 3, t: 'RF-MOVE-Surfaces - 生成面上移动荷载', i: '', m: 'move' },
  { l: 3, t: 'RF-LAMINATE - 层压板面设计', i: '', m: 'lam', end: true },
  { l: 2, t: 'RF-STEEL Surfaces - 面的一般应力分析', i: '', m: 'surf' },
  { l: 2, t: 'RF-STEEL Members - 杆件的一般应力分析', i: '', m: 'steel' },
  { l: 2, t: 'RF-STEEL EC3 - 按照欧洲规范 3 的钢杆件设计', i: '', m: 'steel' },
  { l: 2, t: 'RF-STEEL AISC - 按照 AISC (LRFD 或 ASD)', i: '', m: 'steel' },
  { l: 2, t: 'RF-STEEL IS - 按照 IS 的钢杆件设计', i: '', m: 'steel' },
  { l: 2, t: 'RF-STEEL SIA - 按照 SIA 的钢杆件设计', i: '', m: 'steel' },
  { l: 2, t: 'RF-STEEL BS - 按照 BS 的钢杆件设计', i: '', m: 'steel' },
];

const mixed = (text: string) =>
  text.split(/([\x20-\x7e]+)/).filter(Boolean).map((part, i) => (/^[\x20-\x7e]/.test(part) ? <Latin key={i}>{part}</Latin> : part));

function TreeItem({ row }: { row: Row }) {
  return (
    <TreeRow role="treeitem">
      {Array.from({ length: row.l + 1 }, (_, c) => {
        const own = c === row.l;
        const guide: Guide = c === 0 ? (own ? 'stub' : 'none') : own ? (row.end ? 'end' : 'tee') : 'pass';
        return (
          <TreeCell key={c} $guide={guide}>
            {own && row.x && <Expander $open={row.x === '-'} aria-label={row.t} />}
          </TreeCell>
        );
      })}
      {row.m ? <ModuleIcon name={row.m} /> : <Icon name={row.i} size={16} extra={row.b} />}
      <TreeLabel $bold={row.l === 0}>{row.m ? mixed(row.t) : row.t}</TreeLabel>
    </TreeRow>
  );
}

/* ---------- structural model ---------- */

type Pt = [number, number];
const ACROSS: Pt = [231, 93];
const tops: Pt[] = [[878, 628], [1184, 556], [1487, 485], [1792, 414]];
const toFront = (p: Pt, f: number): Pt => [p[0] + ACROSS[0] * f, p[1] + ACROSS[1] * f];
const pts = (...p: Pt[]) => p.map(q => q.join(',')).join(' ');
const NAVY = '#1c1c5c';

function Support({ x, y }: { x: number; y: number }) {
  return (
    <g>
      <polygon points={pts([x - 10, y + 26], [x + 10, y + 24], [x + 53, y + 55], [x + 7, y + 37], [x - 53, y + 50])} fill="#7cf87c" />
      <polygon points={pts([x - 53, y + 50], [x + 7, y + 37], [x + 53, y + 55], [x - 7, y + 69])} fill="#3cdc3c" />
      <ellipse cx={x} cy={y + 16} rx="19" ry="17" fill="#3afc3a" />
      <path d={`M${x} ${y + 4}V${y + 17}L${x - 9} ${y + 28}M${x} ${y + 17}L${x + 9} ${y + 28}`} stroke="#34f434" strokeWidth="2" fill="none" />
    </g>
  );
}

function Column({ x, y }: { x: number; y: number }) {
  const top = y - 272;
  return (
    <g>
      <path d={`M${x - 11} ${top}H${x + 12}V${y + 1}H${x + 2}L${x - 11} ${y - 3}Z`} fill="#6868f6" />
      <path d={`M${x + 6} ${top}V${y}`} stroke="#7272fc" strokeWidth="6" />
      <path d={`M${x} ${top}V${y}M${x - 10} ${top}V${y - 3}`} stroke="#5e5eea" strokeWidth="2" />
    </g>
  );
}

function Beam({ a, b, depth, flange = 2 }: { a: Pt; b: Pt; depth: number; flange?: number }) {
  return (
    <g>
      <polygon points={pts(a, b, [b[0], b[1] + depth], [a[0], a[1] + depth])} fill="#6c6cf8" />
      <line x1={a[0]} y1={a[1] + depth} x2={b[0]} y2={b[1] + depth} stroke="#4444b0" strokeWidth="2" />
      <line x1={a[0]} y1={a[1]} x2={b[0]} y2={b[1]} stroke="#3a3a98" strokeWidth={flange} />
    </g>
  );
}

const Across = ({ at }: { at: Pt }) => <Beam a={[at[0] - 2, at[1] + 2]} b={[at[0] + 231, at[1] + 95]} depth={20} flange={5} />;

function Along({ bay, f, deep, stop }: { bay: number; f: number; deep?: boolean; stop?: number }) {
  const s = toFront(tops[bay], f);
  const e = toFront(tops[bay + 1], f);
  const dy = deep ? 0 : 5;
  const x2 = stop ?? e[0] - 6;
  const y2 = s[1] + ((e[1] - s[1]) * (x2 - s[0])) / (e[0] - s[0]);
  return <Beam a={[s[0], s[1] + dy]} b={[x2, y2 + dy]} depth={deep ? 20 : 15} />;
}

function Brace({ a, b, w }: { a: Pt; b: Pt; w: number }) {
  return (
    <g>
      <line x1={a[0]} y1={a[1]} x2={b[0]} y2={b[1]} stroke="#5a5ade" strokeWidth={w} />
      <line x1={a[0]} y1={a[1]} x2={b[0]} y2={b[1]} stroke="#6e6ef4" strokeWidth={w - 3} />
    </g>
  );
}

const Pin = ({ x, y }: { x: number; y: number }) => <circle cx={x} cy={y} r="3" fill="#fff" stroke="#5c88b8" strokeWidth="1" />;
const Mark = ({ x, y }: { x: number; y: number }) => <rect x={x - 2} y={y - 2} width="3" height="3" fill="#a81c2c" />;

function Dim({ a, b }: { a: Pt; b: Pt }) {
  const ang = (Math.atan2(b[1] - a[1], b[0] - a[0]) * 180) / Math.PI;
  return (
    <g>
      <line x1={a[0]} y1={a[1]} x2={b[0]} y2={b[1]} stroke="#44446c" strokeWidth="1" />
      <path d="M0 0l9-3v6z" fill={NAVY} transform={`translate(${a[0]} ${a[1]}) rotate(${ang})`} />
      <path d="M0 0l9-3v6z" fill={NAVY} transform={`translate(${b[0]} ${b[1]}) rotate(${ang + 180})`} />
    </g>
  );
}

function DimText({ x, y, turn, w, children }: { x: number; y: number; turn: number; w: number; children: string }) {
  return (
    <g transform={`translate(${x} ${y}) rotate(${turn})`}>
      <rect x={-w / 2} y={-7} width={w} height={13} fill="#fcfcfc" />
      <text y="4" textAnchor="middle" fontSize="11" fontWeight="700" fill={NAVY} stroke={NAVY} strokeWidth="0.4">{children}</text>
    </g>
  );
}

function Axes({ x, y }: { x: number; y: number }) {
  return (
    <g fontSize="10" strokeWidth="2">
      <line x1={x} y1={y} x2={x - 24} y2={y + 5} stroke="#2c9c2c" />
      <path d={`M${x - 32} ${y + 7}l10-5v6z`} fill="#2c9c2c" />
      <line x1={x} y1={y} x2={x + 16} y2={y + 6} stroke="#d02020" />
      <path d={`M${x + 24} ${y + 9}l-8-6-2 6z`} fill="#b01818" />
      <line x1={x} y1={y} x2={x} y2={y + 30} stroke="#14148c" />
      <path d={`M${x} ${y + 38}l-3-10h6z`} fill="#14148c" />
      <text x={x - 43} y={y + 12} fill="#2cb02c">Y</text>
      <text x={x + 28} y={y + 16} fill="#d83030">X</text>
      <text x={x - 3} y={y + 52} fill="#1c3c8c">Z</text>
    </g>
  );
}

const Scene = styled.svg`
  display: block;
  width: 100%;
  height: 100%;
  font-family: "Liberation Sans", sans-serif;
`;

const quarter = [0, 0.25, 0.5, 0.75, 1];

function Model() {
  const back: Pt[] = [[1183, 841], [1486, 770], [1790, 698]];
  const front: Pt[] = [[878, 912], [1109, 1006], [1413, 935], [1717, 864], [2021, 793]];
  return (
    <Scene viewBox="329 101 2229 1052" role="img" aria-label="SteelPlatform_final">
      {back.map(([x, y]) => <Support key={x} x={x} y={y} />)}
      {back.map(([x, y]) => <Column key={x} x={x} y={y} />)}
      <Brace a={[1550, 540]} b={[1782, 695]} w={6} />
      <Brace a={[1493, 765]} b={[1784, 434]} w={8} />
      <Brace a={[1215, 567]} b={[1290, 571]} w={6} />
      <polygon points={pts([1323, 591], [1432, 634], [1447, 675], [1430, 668])} fill="#8f9e99" />
      <polygon points={pts([1432, 634], [1577, 601], [1470, 669], [1447, 675])} fill="#94a39e" />
      <path d="M1323 591L1432 634L1577 601M1432 634L1447 675" fill="none" stroke="#222" strokeDasharray="5 2" />
      {front.map(([x, y]) => <Support key={x} x={x} y={y} />)}
      {front.map(([x, y]) => <Column key={x} x={x} y={y} />)}
      <Brace a={[1729, 596]} b={[2017, 789]} w={6} />
      <Brace a={[1729, 850]} b={[2010, 532]} w={9} />

      <Across at={tops[3]} />
      {quarter.map(f => <Along key={f} bay={2} f={f} />)}
      <Across at={tops[2]} />
      <Along bay={1} f={0} />
      <Along bay={1} f={0.25} deep stop={1324} />
      <Beam a={[1322, 563]} b={[1432, 610]} depth={20} />
      <Along bay={1} f={0.5} stop={1378} />

      <polygon points="1323,337 1432,380 1432,608 1323,563" fill="#b0c3c1" stroke="#44504e" strokeWidth="1" />
      <polygon points="1432,380 1577,347 1577,575 1432,608" fill="#bccfcd" stroke="#44504e" strokeWidth="1" />
      <polygon points="1323,337 1467,302 1577,347 1432,380" fill="#7c8a87" />
      <polygon points="1323,337 1467,302 1577,347 1450,323" fill="#6e7b78" />
      <path d="M1323 337L1467 302L1577 347L1432 380ZM1323 337L1450 323L1577 347M1467 302L1450 323L1432 380" fill="none" stroke="#1c2423" strokeWidth="1" />
      <line x1="1432.5" y1="380" x2="1432.5" y2="608" stroke="#181c1c" strokeWidth="2" />
      {([[1323, 337], [1467, 302], [1577, 347], [1432, 380], [1450, 323]] as Pt[]).map(([x, y]) => <Mark key={x} x={x} y={y} />)}

      <Along bay={1} f={0.75} deep />
      <Along bay={1} f={1} />
      <Across at={tops[1]} />
      {quarter.map(f => <Along key={f} bay={0} f={f} />)}
      <Across at={tops[0]} />

      {quarter.map(f => {
        const p = tops.map(t => toFront(t, f));
        return (
          <g key={f}>
            <Pin x={p[0][0] + 5} y={p[0][1] + 9} />
            <Mark x={p[0][0] - 1} y={p[0][1] + 11} />
            <Pin x={p[1][0] - 6} y={p[1][1] + 12} />
            <Pin x={p[1][0] + 3} y={p[1][1] + 10} />
            {f > 0.3 && <Pin x={p[2][0] - 6} y={p[2][1] + 12} />}
            {f > 0.3 && <Pin x={p[2][0] + 3} y={p[2][1] + 10} />}
            <Pin x={p[3][0] - 6} y={p[3][1] + 12} />
          </g>
        );
      })}
      <Pin x={1320} y={574} />
      <Pin x={1369} y={597} />
      <Pin x={1427} y={618} />
      <Pin x={1579} y={583} />
      <circle cx="1530" cy="560" r="3" fill="#fff" stroke="#7ca0b0" />
      <path d="M1376 563L1368 585M1507 568L1512 590M1508 596V602M1432 612V634" stroke="#222" strokeDasharray="4 1" />
      <path d="M1372 563h6M1365 585h6M1504 568h6M1509 591h7" stroke="#a81c2c" strokeWidth="3" />
      {([[1371, 590], [1508, 595], [1508, 602], [1432, 619], [1432, 634], [1583, 584], [1577, 601], [1447, 675], [1430, 668], [1470, 669], [1323, 591], [1110, 723], [1414, 652], [1719, 581], [2024, 509]] as Pt[]).map(([x, y]) => <Mark key={`${x}-${y}`} x={x} y={y} />)}

      <path d="M876 910L797 930M1108 1004L1030 1022M1117 1007L1170 1029M2032 522L2082 543M2028 793L2084 816" stroke="#44446c" />
      <Dim a={[801, 929]} b={[1030, 1022]} />
      <Dim a={[1168, 1028]} b={[2078, 815]} />
      <Dim a={[2078, 543]} b={[2078, 813]} />
      <DimText x={916} y={976} turn={22} w={32}>4.000</DimText>
      <DimText x={1623} y={922} turn={-13} w={38}>12.000</DimText>
      <DimText x={2079} y={677} turn={-90} w={34}>3.000</DimText>
      <Axes x={1791} y={698} />
      <Axes x={384} y={1008} />
      <text x="2531" y="1145" fontSize="11" fill="#333">[m]</text>
    </Scene>
  );
}

/* ---------- work area ---------- */

const Work = styled.section`
  flex: 1;
  min-width: 0;
  display: flex;
  flex-direction: column;
  padding-right: 2px;
`;

const Viewport = styled.div`
  flex: 1;
  min-height: 0;
  border: 2px solid #7c818a;
  border-right: 0;
  border-bottom: 1px solid #dadada;
  background: #fcfcfc;
`;

const DataPanel = styled.section`
  flex: none;
  display: flex;
  flex-direction: column;
  border-top: 6px solid #dbe0ea;
  background: #eeeeee;
`;

const DataTools = styled.div`
  height: 25px;
  display: flex;
  align-items: center;
  padding-left: 9px;
  background: linear-gradient(#e9eef8, #d2d8e4);
`;

const Sheet = styled.div`
  display: flex;
  gap: 1px;
  padding: 2px 0 16px 2px;
  border: 1px solid #7c7c7c;
  border-width: 1px 1px 2px 2px;
`;

const Grid = styled.table`
  flex: 1;
  width: 100%;
  table-layout: fixed;
  border-collapse: separate;
  border-spacing: 0;
  border-left: 1px solid #8a8a8a;
  border-top: 1px solid #8a8a8a;
  font-size: 10px;
  color: #222;
  th, td { padding: 0 4px; overflow: hidden; white-space: nowrap; font-weight: 400; }
`;

const Letter = styled.th<{ $on?: boolean }>`
  height: 14px;
  line-height: 11px;
  font-size: 11px;
  border-right: 1px solid #7c7c7c;
  border-bottom: 2px solid #7c7c7c;
  background: ${p => (p.$on ? '#3296f0' : '#dededc')};
  color: ${p => (p.$on ? '#a8dcff' : '#444')};
`;

const Head = styled.th<{ $last?: boolean; $bare?: boolean }>`
  height: 16px;
  line-height: 15px;
  font-size: 12px;
  border-right: 1px solid ${p => (p.$bare ? 'transparent' : '#a8a8a8')};
  border-bottom: ${p => (p.$last ? '1px solid #9c9c9c' : '0')};
  background: #ededed;
  small { font-size: 10px; }
`;

const RowHead = styled.th<{ $on?: boolean }>`
  height: 16px;
  line-height: 14px;
  font-size: 11px;
  border-right: 1px solid #7c7c7c;
  border-bottom: 1px solid #7c7c7c;
  background: ${p => (p.$on ? '#3296f0' : '#e6e6e6')};
  color: ${p => (p.$on ? '#a8dcff' : '#444')};
`;

const Cell = styled.td<{ $fill?: string; $align?: string; $focus?: boolean }>`
  height: 16px;
  line-height: 15px;
  text-align: ${p => p.$align ?? 'left'};
  border-right: 1px solid #a8a8a8;
  border-bottom: 1px solid #a8a8a8;
  background: ${p => p.$fill ?? '#fcfcfc'};
  box-shadow: ${p => (p.$focus ? 'inset 0 0 0 1px #777' : 'none')};
`;

const Check = styled.input.attrs({ type: 'checkbox' })`
  appearance: none;
  display: block;
  width: 12px;
  height: 12px;
  margin: 0 auto;
  border: 1px solid #333;
  border-radius: 2px;
  box-shadow: 1px 1px 0 #555;
  background: #fff;
  &:checked::after {
    content: '';
    display: block;
    width: 4px;
    height: 7px;
    margin: 0 0 0 3px;
    border: solid #111;
    border-width: 0 2px 2px 0;
    transform: rotate(40deg);
  }
`;

const Category = styled.div`
  display: flex;
  align-items: center;
  gap: 5px;
  margin-left: -2px;
  font-size: 12px;
  line-height: 15px;
`;

const Tag = styled.span<{ $c: string }>`
  width: 24px;
  height: 13px;
  background: ${p => p.$c};
  color: #fff;
  font-size: 10px;
  line-height: 13px;
  text-align: center;
`;

const TableTabs = styled.div`
  height: 35px;
  display: flex;
  align-items: flex-start;
  gap: 1px;
  border-bottom: 1px solid #fafafa;
`;

const TableTab = styled.button<{ $on?: boolean }>`
  height: 17px;
  padding: 0 4px;
  border: 1px solid #8a8a8a;
  border-top: 0;
  border-radius: 0 0 4px 4px;
  background: ${p => (p.$on ? '#fcfcfc' : '#ececec')};
  font-size: 12px;
  line-height: 16px;
  color: #222;
`;

const StatusBar = styled.footer`
  height: 21px;
  flex: none;
  display: grid;
  grid-template-columns: 1fr 190px 88px 74px 74px 73px;
  padding-top: 1px;
  background: linear-gradient(#d4d8e0, #b4bac4 40%, #a6adb9 80%, #b4b9c4);
`;

const StatusToggles = styled.div`
  display: flex;
  justify-content: flex-end;
  gap: 2px;
`;

const Toggle = styled.button<{ $up?: boolean; $w: number }>`
  width: ${p => p.$w}px;
  height: 19px;
  padding-right: 4px;
  border: 1px solid ${p => (p.$up ? '#c8ccd4' : '#70747c')};
  border-right-color: #e8eaf0;
  border-bottom-color: #e8eaf0;
  background: ${p => (p.$up ? '#c4c6d0' : 'none')};
  font-size: 12px;
  line-height: 17px;
  color: #33363c;
`;

const StatusSlot = styled.span`
  margin: 3px 0;
  border-right: 1px solid #8c94a0;
`;

type Load = { id: string; name: string; tag: string; color: string; kind: string; factors?: string[] };

const loads: Load[] = [
  { id: 'LC1', name: 'Self-Weight', tag: 'G', color: '#000', kind: '永久', factors: ['0.000', '0.000', '1.000'] },
  { id: 'LC2', name: 'Imposed Loads', tag: 'QiA', color: '#cc4440', kind: '活荷载 - 类别 A: 住房/休息室' },
  { id: 'LC3', name: 'Wind in +X', tag: 'Qw', color: '#14a850', kind: '风荷载' },
  { id: 'LC4', name: 'Wind in +Y', tag: 'Qw', color: '#14a850', kind: '风荷载' },
  { id: 'LC5', name: 'Imperfections in +X', tag: 'Imp', color: '#1c4898', kind: '缺陷' },
  { id: 'LC6', name: 'Imperfections in +Y', tag: 'Imp', color: '#1c4898', kind: '缺陷' },
];

const widths = [45, 191, 72, 222, 54, 60, 60, 60];

function LoadTable() {
  const off = '#ebebeb';
  return (
    <Grid>
      <colgroup>
        {widths.map((w, i) => <col key={i} width={w} />)}
        <col />
      </colgroup>
      <thead>
        <tr>
          <Letter as="td" />
          {'ABCDEFGH'.split('').map(c => <Letter key={c} $on={c === 'A'}>{c}</Letter>)}
        </tr>
        <tr>
          <Head>荷载</Head><Head>荷载工况</Head><Head /><Head><small>EN 1990 | CEN</small></Head><Head />
          <Head colSpan={2} $bare>自重 - 系数</Head><Head /><Head />
        </tr>
        <tr>
          <Head $last>工况</Head><Head $last>描述</Head><Head $last>计算</Head><Head $last>作用类别</Head><Head $last>激活</Head>
          <Head $last>X</Head><Head $last>Y</Head><Head $last>Z</Head><Head $last>注释</Head>
        </tr>
      </thead>
      <tbody>
        {loads.map((r, n) => (
          <tr key={r.id}>
            <RowHead scope="row" $on={n === 0}>{r.id}</RowHead>
            <Cell $focus={n === 0}>{r.name}</Cell>
            <Cell><Check defaultChecked aria-label={`${r.id} 计算`} /></Cell>
            <Cell><Category><Tag $c={r.color}>{r.tag}</Tag>{r.kind}</Category></Cell>
            <Cell><Check defaultChecked={n === 0} aria-label={`${r.id} 激活`} /></Cell>
            {[0, 1, 2].map(k => <Cell key={k} $align="right" $fill={r.factors ? undefined : off}>{r.factors?.[k]}</Cell>)}
            <Cell />
          </tr>
        ))}
        <tr>
          <RowHead scope="row">LC7</RowHead>
          <Cell />
          {[0, 1, 2, 3, 4, 5, 6].map(k => <Cell key={k} $fill={off} />)}
        </tr>
      </tbody>
    </Grid>
  );
}

const SheetScroll = styled(ScrollV)`
  width: 15px;
  margin-right: 2px;
`;

const HeadButtons = () => (
  <WindowButtons $gap={8}>
    <WindowButton $size={9} aria-label="pin"><svg viewBox="0 0 9 9"><path d="M3 1h4v4H3zM2 5h6M5 5v4" /></svg></WindowButton>
    <WindowButton $size={9} aria-label="close"><svg viewBox="0 0 9 9"><path d="M1 1l7 7M8 1L1 8" /></svg></WindowButton>
  </WindowButtons>
);

const menus: [string, string][] = [
  ['文件', 'F'], ['编辑', 'E'], ['视图', 'V'], ['插入', 'I'], ['计算', 'C'], ['结果', 'R'], ['工具', 'T'], ['表格', 'B'],
  ['选项', 'O'], ['', 'Developers'], ['附加模块', 'A'], ['窗口', 'W'], ['帮助', 'H'],
];

export default function App() {
  return (
    <Window>
      <GlobalStyle />
      <TitleBar>
        <Icon name="app" />
        <TitleText>RFEM 5.23.01 x64 Developer - [SteelPlatform_final*]</TitleText>
        <WindowButtons $gap={34}>
          <WindowButton $size={11} aria-label="minimize"><svg viewBox="0 0 11 11"><path d="M0 5.5h11" /></svg></WindowButton>
          <WindowButton $size={11} aria-label="restore"><svg viewBox="0 0 11 11"><path d="M1 3h7v7H1zM3 3V1h7v7H8" /></svg></WindowButton>
          <WindowButton $size={11} aria-label="close"><svg viewBox="0 0 11 11"><path d="M1 1l9 9M10 1l-9 9" /></svg></WindowButton>
        </WindowButtons>
      </TitleBar>

      <MenuBar>
        <Grip />
        <Icon name="rfem" />
        {menus.map(([name, key]) => (
          <MenuItem key={key}>{name}<small>{name ? <>(<u>{key}</u>)</> : key}</small></MenuItem>
        ))}
        <WindowButtons $gap={7}>
          <WindowButton $size={9} aria-label="minimize document"><svg viewBox="0 0 9 9"><path d="M1 7h7" strokeWidth="2" /></svg></WindowButton>
          <WindowButton $size={9} aria-label="restore document"><svg viewBox="0 0 9 9"><path d="M1 4h5v4H1zM3 3V1h5v4" /></svg></WindowButton>
          <WindowButton $size={9} aria-label="close document"><svg viewBox="0 0 9 9"><path d="M1 1l7 7M8 1L1 8" strokeWidth="2" /></svg></WindowButton>
        </WindowButtons>
      </MenuBar>

      <ToolRow>
        <ToolStrip>
          <Grip />
          <Tools rule={7} items="new open boxBrown boxBlue save clip print preview | undo redo | rhomb lasso target yplus ysheet | *nav *tbl | loadcase" />
          <CasePicker>
            <select aria-label="荷载工况" defaultValue="LC1 - Self-Weight"><option>LC1 - Self-Weight</option></select>
          </CasePicker>
          <Tools rule={7} items="prev next eyeA xxx eyeB xxr | glasses calc calc2" />
        </ToolStrip>
        <ToolStrip>
          <Grip />
          <Tools rule={7} items="dots gridpt snap snap2 *snap3 mesh flag | chain rotate mirror cross info sheetc gears" />
        </ToolStrip>
        <ToolStrip>
          <Grip />
          <Tools items="teal tealUp pdf pdfUp" />
        </ToolStrip>
      </ToolRow>

      <ToolRow>
        <ToolStrip>
          <Grip />
          <Tools items="node v line member v poly v | support linesup surfsup | dim v dimtxt frame | surf v opening v shell v solid solidset v | combo v nload mload mload sload gload v" />
        </ToolStrip>
        <ToolStrip>
          <Grip />
          <Tools items="tele zoomw zoomx cube cubes | vx vy vz vnx v scope v | iso v" />
        </ToolStrip>
        <ToolStrip>
          <Grip />
          <Tools items="archg hand | isec patch prism greens wedge cubesY v ibeamr cubesG | door pen v rainbow v" />
        </ToolStrip>
        <ToolStrip>
          <Grip />
          <Tools items="winA winB ruler hammer bricks steel" />
        </ToolStrip>
      </ToolRow>

      <Main>
        <Navigator>
          <PanelHead>
            <h2>项目导航器 - 数据</h2>
            <HeadButtons />
          </PanelHead>
          <TreeBox>
            <Tree role="tree">
              {rows.map((r, i) => <TreeItem key={i} row={r} />)}
            </Tree>
            <ScrollV>
              <Arrow $turn={0} $long={26} aria-label="up"><Chevron /></Arrow>
              <Thumb $grow={590} />
              <Track $grow={620} />
              <Arrow $turn={180} $long={17} aria-label="down"><Chevron /></Arrow>
            </ScrollV>
            <ScrollH>
              <Arrow $turn={-90} $long={17} aria-label="left"><Chevron /></Arrow>
              <Thumb $grow={186} />
              <Track $grow={79} />
              <Arrow $turn={90} $long={17} aria-label="right"><Chevron /></Arrow>
            </ScrollH>
          </TreeBox>
          <NavTabs>
            <NavTab $on><Icon name="mData" />数据</NavTab>
            <NavTab><Icon name="mView" />显示</NavTab>
            <NavTab><Icon name="mEye" />视图</NavTab>
          </NavTabs>
        </Navigator>

        <Work>
          <Viewport><Model /></Viewport>
          <DataPanel>
            <PanelHead>
              <h2>2.1 荷载工况</h2>
              <HeadButtons />
            </PanelHead>
            <DataTools>
              <Tools items="tgreen *tblue tdown tgray twave | tleft tright | *hookA *hookB cycle | pblue pbox pcol | px | delrow delL delR | rowsY rowsP rowsC | hammer | glasses | excel | calcp | tiny fx fxr" />
            </DataTools>
            <Sheet>
              <LoadTable />
              <SheetScroll>
                <Arrow $turn={0} $long={16} aria-label="up"><Chevron /></Arrow>
                <Thumb $grow={1} />
                <Arrow $turn={180} $long={18} aria-label="down"><Chevron /></Arrow>
              </SheetScroll>
            </Sheet>
            <TableTabs>
              {['荷载工况', '作用', '组合表达式', '作用组合', '荷载组合', '结果组合', '超级组合'].map((t, i) => (
                <TableTab key={t} $on={i === 0}>{t}</TableTab>
              ))}
            </TableTabs>
          </DataPanel>
        </Work>
      </Main>

      <StatusBar>
        <StatusToggles>
          <Toggle $w={34}>捕捉</Toggle>
          <Toggle $w={34} $up>栅格</Toggle>
          <Toggle $w={62}>笛卡尔</Toggle>
          <Toggle $w={60}>对象捕捉</Toggle>
          <Toggle $w={48}>辅助线</Toggle>
          <Toggle $w={28}>DXF</Toggle>
        </StatusToggles>
        <StatusSlot /><StatusSlot /><StatusSlot /><StatusSlot />
      </StatusBar>

      <Brand>
        <BrandDisc>
          <svg viewBox="0 0 48 25" aria-hidden="true">
            <path d="M0 0h48v25H0z" fill="#dce8f0" />
            <path d="M0 17h48M16 1v23" stroke="#5c6894" strokeWidth="2.5" />
            <path d="M1 16L16 3L44 16M16 3l13 13" fill="none" stroke="#5c6894" strokeWidth="1.2" />
          </svg>
          Dlubal
        </BrandDisc>
        <BrandText>
          <BrandHan><span>德</span><span>鲁</span><span>巴</span></BrandHan>
          <BrandLatin>dlubal<span>.COM</span></BrandLatin>
        </BrandText>
      </Brand>
    </Window>
  );
}
